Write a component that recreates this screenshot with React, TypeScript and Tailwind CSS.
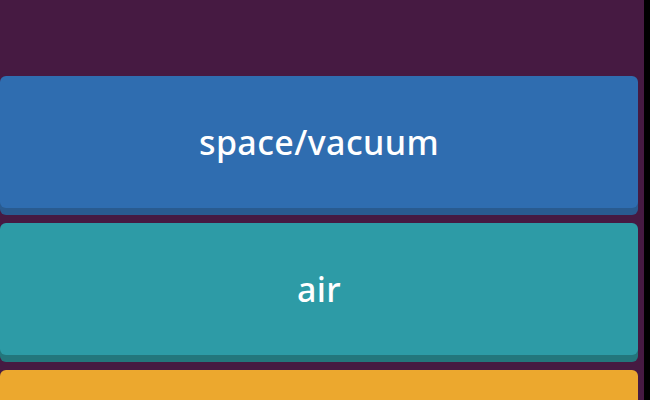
import React from "react";

const answers = [
  { label: "space/vacuum", face: "bg-[#2f6db0]", edge: "shadow-[0_7px_0_#295b90]" },
  { label: "air", face: "bg-[#2d9ba6]", edge: "shadow-[0_7px_0_#23767c]" },
  { label: "water", face: "bg-[#eca82e]", edge: "shadow-[0_7px_0_#b8801f]" },
];

export default function App() {
  return (
    <div className="flex h-[400px] w-[650px] overflow-hidden bg-black">
      <div
        className="flex w-[644px] flex-col gap-[15px] bg-[#461a42] pt-[76px] pr-[6px]"
        style={{ fontFamily: '"Noto Sans", "Open Sans", sans-serif' }}
      >
        {answers.map((a) => (
          <div
            key={a.label}
            className={`flex h-[132px] shrink-0 items-center justify-center rounded-[6px] ${a.face} ${a.edge}`}
          >
            <span className="text-[34px] font-medium leading-none tracking-[0.4px] text-white">{a.label}</span>
          </div>
        ))}
      </div>
    </div>
  );
}
